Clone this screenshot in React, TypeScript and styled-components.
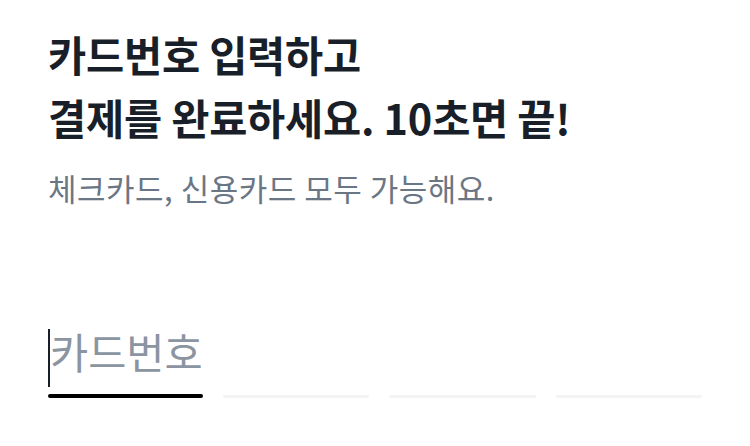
import styled, { createGlobalStyle } from "styled-components";

const GlobalStyle = createGlobalStyle`
  html, body {
    margin: 0;
    padding: 0;
    background: #ffffff;
  }
  body {
    font-family: "Noto Sans CJK KR", "Noto Sans", sans-serif;
  }
`;

const Page = styled.div`
  width: 750px;
  height: 446px;
  box-sizing: border-box;
  padding: 23px 48px 0 48px;
  display: flex;
  flex-direction: column;
  background: #ffffff;
`;

const Title = styled.h1`
  margin: 0;
  font-size: 41.5px;
  font-weight: 700;
  line-height: 63px;
  letter-spacing: -0.2px;
  color: #191f28;
`;

const Subtitle = styled.p`
  margin: 19px 0 0 0;
  font-size: 31px;
  font-weight: 400;
  line-height: 40px;
  letter-spacing: 0.5px;
  color: #6b7684;
`;

const FieldRow = styled.div`
  margin-top: 118px;
  display: flex;
  gap: 20px;
  align-items: flex-end;
`;

interface SegmentProps {
  $active?: boolean;
}
const Segment = styled.div<SegmentProps>`
  flex: ${(p) => (p.$active ? "0 0 154px" : "1 1 0")};
  display: flex;
  flex-direction: column;
  gap: 6px;
`;

const InputWrap = styled.div`
  position: relative;
  height: 62px;
  display: flex;
  align-items: flex-start;
`;

const Caret = styled.span`
  position: absolute;
  left: 0;
  top: 3px;
  width: 2px;
  height: 58px;
  background: #191f28;
`;

const Placeholder = styled.span`
  padding-left: 2px;
  font-size: 41.5px;
  line-height: 50px;
  font-weight: 400;
  letter-spacing: 0;
  color: #8b95a1;
  white-space: nowrap;
`;

const Underline = styled.div<SegmentProps>`
  height: ${(p) => (p.$active ? "4px" : "3px")};
  border-radius: 2px;
  background: ${(p) => (p.$active ? "#000000" : "#f2f4f6")};
`;

export default function App() {
  return (
    <>
      <GlobalStyle />
      <Page>
        <Title>
          카드번호 입력하고
          <br />
          결제를 완료하세요. 10초면 끝!
        </Title>
        <Subtitle>체크카드, 신용카드 모두 가능해요.</Subtitle>
        <FieldRow>
          <Segment $active>
            <InputWrap>
              <Caret />
              <Placeholder>카드번호</Placeholder>
            </InputWrap>
            <Underline $active />
          </Segment>
          <Segment>
            <Underline />
          </Segment>
          <Segment>
            <Underline />
          </Segment>
          <Segment>
            <Underline />
          </Segment>
        </FieldRow>
      </Page>
    </>
  );
}
